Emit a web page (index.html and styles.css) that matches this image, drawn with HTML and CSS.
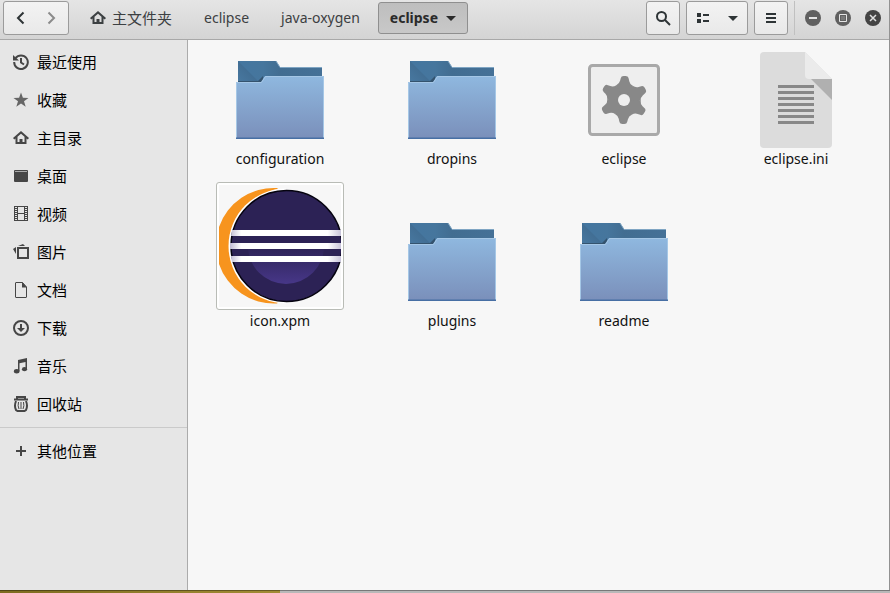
FILE: index.html
```html
<!DOCTYPE html>
<html lang="zh-CN">
<head>
<meta charset="utf-8">
<title>eclipse</title>
<link rel="stylesheet" href="styles.css">
</head>
<body>
<svg class="defs" width="0" height="0" aria-hidden="true">
  <defs>
    <linearGradient id="front" x1="0" y1="0" x2="0" y2="1"><stop offset="0" stop-color="#8fb8df"/><stop offset="1" stop-color="#7a8fba"/></linearGradient>
    <linearGradient id="back" x1="0" y1="0" x2="1" y2="0"><stop offset="0" stop-color="#4476a0"/><stop offset=".3" stop-color="#46769d"/><stop offset=".5" stop-color="#426d91"/><stop offset="1" stop-color="#457197"/></linearGradient>
    <linearGradient id="shade" x1="0" y1="1" x2=".6" y2=".4"><stop offset="0" stop-color="#4878a0"/><stop offset="1" stop-color="#406c91"/></linearGradient>
    <linearGradient id="glow" x1="0" y1="0" x2="0" y2="1"><stop offset="0" stop-color="#2c2255"/><stop offset="1" stop-color="#473788"/></linearGradient>
    <linearGradient id="stripe" x1="0" y1="0" x2="1" y2="0"><stop offset="0" stop-color="#c0bbd4"/><stop offset=".1" stop-color="#fff"/><stop offset=".88" stop-color="#fff"/><stop offset="1" stop-color="#c9c5da"/></linearGradient>
    <symbol id="home" viewBox="0 0 16 16"><path d="M8 1 0 8l1.300 1.400L2.500 8.400V14h11V8.400l1.200 1L16 8zM8 3.700l3.500 3V12H9.500V9h-3v3h-2V6.700z" fill-rule="evenodd"/></symbol>
    <symbol id="folder" viewBox="0 0 96 96">
      <path d="M6 9h38l4 6h42v20H6z" fill="url(#back)"/>
      <path d="M6 9v21h21z" fill="url(#shade)"/>
      <path d="M44 9l4 6.500h42" fill="none" stroke="#7fa5c3"/>
      <path d="M6 29h20l5-5v6H6z" fill="#34536e"/>
      <path d="M4 30h25l4-6h59v63H4z" fill="url(#front)"/>
      <path d="M4.500 86V30.500h25l4-6H91.500V86" fill="none" stroke="#a5c7e6"/>
      <path d="M4 85.500h88V87H4z" fill="#476fa4"/>
    </symbol>
  </defs>
</svg>
<div class="window">
  <header class="headerbar">
    <div class="linked">
      <button type="button" aria-label="后退"><svg width="16" height="16" viewBox="0 0 16 16"><path d="M11.500 2.500 6 8l5.500 5.500" class="line bold"/></svg></button>
      <button type="button" aria-label="前进" class="dim"><svg width="16" height="16" viewBox="0 0 16 16"><path d="M4.500 2.500 10 8l-5.500 5.500" class="line bold"/></svg></button>
    </div>
    <nav class="pathbar">
      <button type="button"><svg width="16" height="16"><use href="#home"/></svg>主文件夹</button>
      <button type="button">eclipse</button>
      <button type="button">java-oxygen</button>
      <button type="button" class="current">eclipse<svg width="10" height="5" viewBox="0 0 10 5"><path d="M0 0h10L5 5z"/></svg></button>
    </nav>
    <div class="tools">
      <button type="button" class="tool" aria-label="搜索"><svg width="16" height="16" viewBox="0 0 16 16"><circle cx="6.500" cy="6.500" r="4.500" class="line bold"/><path d="M10 10l5 5" class="line bold"/></svg></button>
      <button type="button" class="tool view" aria-label="视图"><svg width="12" height="10" viewBox="0 0 12 10"><path d="M0 0h4v4H0zM0 6h4v4H0zM6 1h6v2H6zM6 7h6v2H6z"/></svg><svg width="10" height="5" viewBox="0 0 10 5"><path d="M0 0h10L5 5z"/></svg></button>
      <button type="button" class="tool" aria-label="菜单"><svg width="10" height="10" viewBox="0 0 10 10"><path d="M0 0h10v2H0zM0 4h10v2H0zM0 8h10v2H0z"/></svg></button>
    </div>
    <div class="controls">
      <button type="button" aria-label="最小化"><svg width="16" height="16" viewBox="0 0 16 16"><circle cx="8" cy="8" r="8"/><path d="M4 7h8v2H4z" fill="#e4e4e4"/></svg></button>
      <button type="button" aria-label="最大化"><svg width="16" height="16" viewBox="0 0 16 16"><circle cx="8" cy="8" r="8"/><path d="M4.500 4.500h7v7h-7z" fill="none" stroke="#e4e4e4"/><path d="M6 6h4v4H6z" fill="#777"/></svg></button>
      <button type="button" aria-label="关闭" class="close"><svg width="16" height="16" viewBox="0 0 16 16"><circle cx="8" cy="8" r="8"/><path d="M5 5l6 6M11 5l-6 6" fill="none" stroke="#e0e0e0" stroke-width="1.500"/></svg></button>
    </div>
  </header>
  <div class="content">
    <nav class="sidebar">
      <a href="#"><svg width="16" height="16" viewBox="0 0 16 16"><path d="M2.500 4.200A6.800 6.800 0 1 1 1.200 8" class="line bold"/><path d="M0 1v5.500h6z"/><path d="M8 4v4.500l3 2" class="line bold"/></svg>最近使用</a>
      <a href="#"><svg width="16" height="16" viewBox="0 0 16 16"><path d="M8 .5l1.900 5.300 5.600.1L11 9.300l1.700 5.500L8 11.500l-4.700 3.300L5 9.300.5 5.900l5.600-.1z" fill="#666"/></svg>收藏</a>
      <a href="#"><svg width="16" height="16"><use href="#home"/></svg>主目录</a>
      <a href="#"><svg width="16" height="16" viewBox="0 0 16 16"><path d="M2 2h12q1 0 1 1v10q0 1-1 1H2q-1 0-1-1V3q0-1 1-1z"/><path d="M2 3.500h12" stroke="#aaa"/></svg>桌面</a>
      <a href="#"><svg width="16" height="16" viewBox="0 0 16 16"><path d="M1 0h14v15H1zM5 1v6h6V1zM5 8v6h6V8z" fill-rule="evenodd"/><path d="M3 1v14M13 1v14" stroke="#e6e6e6" stroke-width="2" stroke-dasharray="1 1"/></svg>视频</a>
      <a href="#"><svg width="16" height="16" viewBox="0 0 16 16"><path d="M4 3h12v12H4zM6 5v8h8V5z" fill-rule="evenodd"/><path d="M5 2l5-2 2 2zM0 5l3-2v7z"/></svg>图片</a>
      <a href="#"><svg width="16" height="16" viewBox="0 0 16 16"><path d="M3 .5h6.500L13.500 5v10q0 .5-.5.500H3q-.5 0-.5-.5V1q0-.5.5-.5z" class="line"/><path d="M9 0v5.500h5z"/></svg>文档</a>
      <a href="#"><svg width="16" height="16" viewBox="0 0 16 16"><circle cx="8" cy="8" r="7" class="line bold"/><path d="M7 4h2v4h3l-4 4-4-4h3z"/></svg>下载</a>
      <a href="#"><svg width="16" height="16" viewBox="0 0 16 16"><path d="M5 2l9-2v11h-1.500V4L6.500 5.300V13H5z"/><ellipse cx="3.700" cy="13.200" rx="2.800" ry="2.200"/><ellipse cx="11.500" cy="11.200" rx="2.600" ry="2.100"/></svg>音乐</a>
      <a href="#"><svg width="16" height="16" viewBox="0 0 16 16"><path d="M1 3.500h14M4 3V1h8v2" class="line wide"/><path d="M3 5q-2 5 0 9l1.500 1h7L13 14q2-4 0-9" class="line bold"/><path d="M5.500 6q-1 4 .5 7M8 6v7M10.500 6q1 4-.5 7" class="line"/></svg>回收站</a>
      <hr>
      <a href="#"><svg width="16" height="16" viewBox="0 0 16 16"><path d="M7 3h2v4h4v2H9v4H7V9H3V7h4z"/></svg>其他位置</a>
    </nav>
    <main class="files">
      <figure><svg width="96" height="96"><use href="#folder"/></svg><figcaption>configuration</figcaption></figure>
      <figure><svg width="96" height="96"><use href="#folder"/></svg><figcaption>dropins</figcaption></figure>
      <figure>
        <svg width="96" height="96" viewBox="0 0 96 96">
          <rect x="13.500" y="13.500" width="69" height="69" rx="3" fill="#eee" stroke="#a9a9a9" stroke-width="3"/>
          <g fill="#888" transform="rotate(2 48 48)">
            <circle cx="48" cy="48" r="15"/>
            <path id="tooth" d="M39.500 33.700Q42.800 32 43.400 29L44 26.500Q44.300 24 47 24h2q2.700 0 3 2.500l.6 2.500Q53.200 32 56.500 33.700L48 48z"/>
            <use href="#tooth" transform="rotate(60 48 48)"/><use href="#tooth" transform="rotate(120 48 48)"/><use href="#tooth" transform="rotate(180 48 48)"/><use href="#tooth" transform="rotate(240 48 48)"/><use href="#tooth" transform="rotate(300 48 48)"/>
          </g>
          <circle cx="48" cy="48" r="6" fill="#eee"/>
        </svg>
        <figcaption>eclipse</figcaption>
      </figure>
      <figure>
        <svg width="96" height="96" viewBox="0 0 96 96">
          <path d="M16 0h41l27 27v65q0 4-4 4H16q-4 0-4-4V4q0-4 4-4z" fill="#dcdcdc"/>
          <path d="M57 0l27 27H61q-4 0-4-4z" fill="#ebebeb"/>
          <path d="M63 27h21v21z" fill="#b0b0b0"/>
          <path d="M30 33h36v3H30zM30 39h36v3H30zM30 45h36v3H30zM30 51h36v3H30zM30 57h36v3H30zM30 63h36v3H30zM30 69h36v3H30z" fill="#888"/>
        </svg>
        <figcaption>eclipse.ini</figcaption>
      </figure>
      <figure>
        <svg class="thumb" width="122" height="122" viewBox="0 0 122 122">
          <path d="M58 3A58 58 0 0 0 0 42V79A58 58 0 0 0 58 118.500L59 117.500A58 58 0 0 1 59 4z" fill="#f7941e"/>
          <circle cx="67" cy="61" r="57.500" fill="#fff"/>
          <path d="M67 3h55v116H67z" fill="#f7f7f7"/>
          <circle cx="67.500" cy="61" r="55.500" fill="#2c2255" stroke="#05030f" stroke-width="1.500"/>
          <path d="M29 61a38 38 0 0 0 76 0z" fill="url(#glow)"/>
          <path d="M13 45h109v6H12zM11 58h111v6H11zM12 71h110v6H13z" fill="url(#stripe)"/>
        </svg>
        <figcaption>icon.xpm</figcaption>
      </figure>
      <figure><svg width="96" height="96"><use href="#folder"/></svg><figcaption>plugins</figcaption></figure>
      <figure><svg width="96" height="96"><use href="#folder"/></svg><figcaption>readme</figcaption></figure>
    </main>
  </div>
</div>
<div class="desktop"></div>
</body>
</html>
```
FILE: styles.css
```css
* { box-sizing: border-box; }
body {
  margin: 0;
  min-height: 100vh;
  display: flex;
  flex-direction: column;
  background: #f7f7f7;
  color: #111;
  font: 14px/22px "Noto Sans", "Noto Sans CJK SC", sans-serif;
}
.defs { position: absolute; }
svg { display: block; flex: none; fill: currentColor; }
.line { fill: none; stroke: currentColor; stroke-width: 1; }
.bold { stroke-width: 2; }
.wide { stroke-width: 2; }
.window {
  flex: 1;
  display: flex;
  flex-direction: column;
  border-right: 1px solid #929292;
}
.headerbar {
  display: flex;
  align-items: flex-start;
  height: 40px;
  padding: 1px 8px 0 3px;
  border-bottom: 1px solid #a8a8a8;
  background: linear-gradient(#e5e5e5, #d4d4d4);
}
button {
  display: flex;
  align-items: center;
  justify-content: center;
  margin: 0;
  padding: 0;
  border: 0;
  background: none;
  color: #2e3436;
  font: inherit;
}
.linked, .tool {
  height: 34px;
  border: 1px solid #9b9b9b;
  border-radius: 3px;
  background: linear-gradient(#f3f3f3, #e9e9e9);
}
.linked { display: flex; width: 66px; }
.linked button { flex: 1; }
.linked .dim { color: #8b8b8b; }
.pathbar {
  display: flex;
  flex: 1;
  margin: 1px 0 0 5px;
}
.pathbar button { height: 32px; padding: 0 16px; gap: 6px; color: #3c4042; font-size: 15px; }
.pathbar button:not(:first-child) { font-size: 14px; }
.pathbar .current {
  width: 90px;
  margin-left: 2px;
  padding: 0;
  gap: 8px;
  border: 1px solid #8f8f8f;
  border-radius: 3px;
  background: linear-gradient(#bebebe, #c8c8c8);
  color: #2a2a2a;
  font-weight: 700;
}
.tools {
  display: flex;
  gap: 6px;
  padding-right: 6px;
}
.tool { width: 34px; }
.tool.view { width: 62px; gap: 19px; }
.controls {
  display: flex;
  gap: 14px;
  height: 34px;
  padding-left: 10px;
  border-left: 1px solid #c0c0c0;
}
.controls button { color: #606060; }
.controls .close { color: #444; }
.content { flex: 1; display: flex; }
.sidebar {
  width: 188px;
  padding-top: 3px;
  border-right: 1px solid #ababab;
  background: #e6e6e6;
}
.sidebar a {
  display: flex;
  align-items: center;
  gap: 8px;
  height: 38px;
  padding-left: 13px;
  color: #000;
  font-size: 15px;
  text-decoration: none;
}
.sidebar svg { color: #464646; }
.sidebar hr {
  margin: 4px 0;
  border: 0;
  border-top: 1px solid #cacaca;
}
.files {
  flex: 1;
  display: grid;
  grid-template-columns: repeat(auto-fill, 128px);
  align-content: start;
  align-items: end;
  gap: 12px 44px;
  padding: 12px 28px;
  background: #f7f7f7;
}
figure {
  display: flex;
  flex-direction: column;
  align-items: center;
  margin: 0;
}
.thumb {
  box-sizing: content-box;
  padding: 2px;
  border: 1px solid #b9bcb6;
  border-radius: 3px;
  background: #f7f7f7;
  box-shadow: inset 0 0 0 2px #fff;
}
.desktop {
  height: 3px;
  border-top: 1px solid rgba(0, 0, 0, .35);
  background: linear-gradient(90deg, #7d6b1f, #a28c35 280px, #b8b8b8 280px);
}
```
